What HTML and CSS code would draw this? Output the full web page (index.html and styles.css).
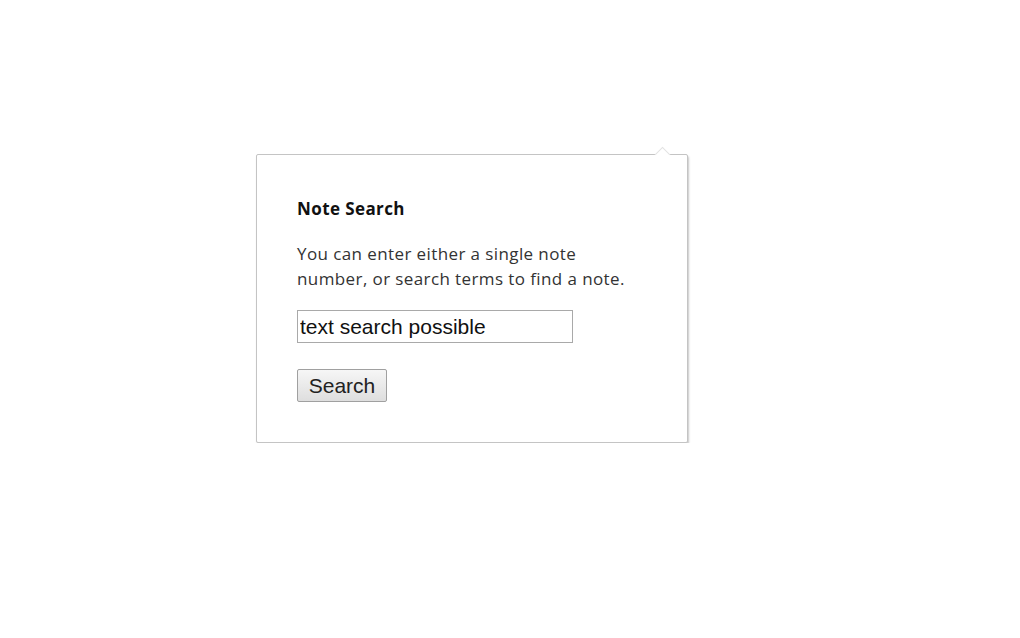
FILE: index.html
```html
<!DOCTYPE html>
<html>
<head>
<meta charset="utf-8">
<link rel="stylesheet" href="styles.css">
</head>
<body>
<div class="stage">
  <div class="popup">
    <span class="arrow"></span>
    <h1 class="title">Note Search</h1>
    <p class="desc">You can enter either a single note<br>number, or search terms to find a note.</p>
    <input class="field" type="text" value="text search possible">
    <div class="actions"><button class="btn">Search</button></div>
  </div>
</div>
</body>
</html>
```

FILE: styles.css
```css
html, body {
  margin: 0;
  background: #ffffff;
}
.stage {
  padding: 154px 0 0 256px;
}
.popup {
  position: relative;
  box-sizing: border-box;
  width: 432px;
  height: 289px;
  background: #fff;
  border: 1px solid #c4c4c4;
  border-radius: 2px;
  box-shadow: 1px 2px 2px rgba(0,0,0,0.22);
  padding: 40px 40px 0 40px;
  font-family: "Open Sans", "Lato", sans-serif;
  color: #222;
}
.arrow {
  position: absolute;
  top: -6px;
  left: 400px;
  width: 10px;
  height: 10px;
  background: #fff;
  border-top: 1px solid #e2e2e2;
  border-left: 1px solid #e2e2e2;
  transform: rotate(45deg);
}
.title {
  margin: 0;
  font-size: 17px;
  font-weight: bold;
  letter-spacing: 0.4px;
  line-height: 28px;
  color: #111;
}
.desc {
  margin: 18px 0 0 0;
  font-size: 17px;
  letter-spacing: 0.4px;
  line-height: 25px;
  color: #333;
}
.field {
  display: block;
  box-sizing: border-box;
  margin: 19px 0 0 0;
  width: 276px;
  height: 33px;
  border: 1px solid #a9a9a9;
  padding: 0 2px;
  font-family: "Liberation Sans", Arial, sans-serif;
  font-size: 21px;
  color: #111;
  background: #fff;
}
.actions {
  margin-top: 26px;
}
.btn {
  box-sizing: border-box;
  width: 90px;
  height: 33px;
  border: 1px solid #a0a0a0;
  border-radius: 2px;
  background: linear-gradient(#f6f6f6, #dedede);
  font-family: "Liberation Sans", Arial, sans-serif;
  font-size: 21px;
  color: #222;
  padding: 0;
}
```
